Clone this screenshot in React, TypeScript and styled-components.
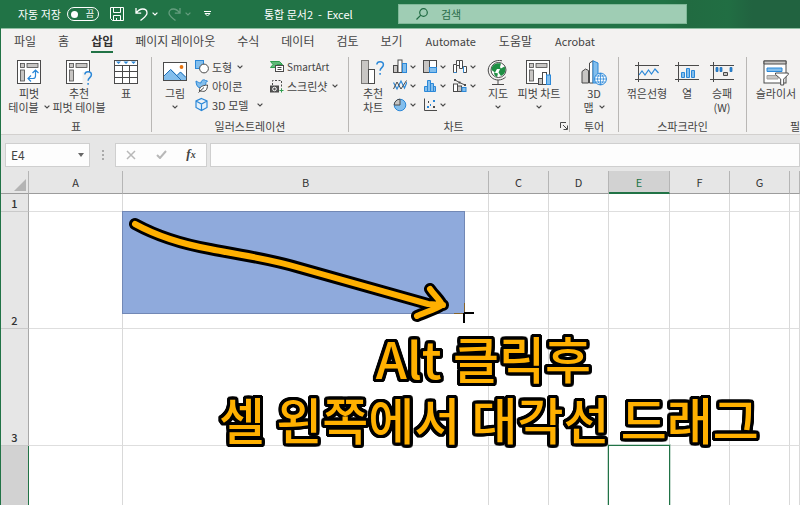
import React from 'react';
import styled, { createGlobalStyle, css } from 'styled-components';

const GREEN = '#217346';
const INK = '#4a4a4a';
const BLUE = '#2b88d8';
const SKY = '#83beec';

const GlobalStyle = createGlobalStyle`
  * { box-sizing: border-box; }
  body {
    margin: 0;
    overflow: hidden;
    background: #fff;
    color: #444;
    font-family: "Noto Sans CJK KR", "Noto Sans", sans-serif;
    font-size: 11px;
  }
  button, input { font: inherit; color: inherit; }
  button { margin: 0; padding: 0; border: 0; background: none; }
  svg { display: block; flex: none; }
`;

const Window = styled.div`
  display: flex;
  flex-direction: column;
  height: 100vh;
  border-left: 1px solid ${GREEN};
`;

/* ---------- Title bar ---------- */

const TitleBar = styled.header`
  display: flex;
  align-items: center;
  height: 29px;
  padding-left: 17px;
  flex: none;
  color: #fff;
  background: linear-gradient(90deg, ${GREEN} 83%, #216b41 86%, #216e43 91%, #216340 94%);
  border-bottom: 1px solid #8fbfa3;
`;

const AutoSave = styled.label`
  display: flex;
  align-items: center;
  gap: 6px;
  white-space: nowrap;
`;

const SwitchTrack = styled.span`
  display: flex;
  align-items: center;
  justify-content: space-between;
  width: 32px;
  height: 14px;
  padding: 0 4px 0 3px;
  border: 1px solid #fff;
  border-radius: 7px;
  font-size: 9px;
  line-height: 12px;
  &::before {
    content: "";
    width: 7px;
    height: 7px;
    border-radius: 50%;
    background: #fff;
  }
`;

const HiddenCheck = styled.input`
  position: absolute;
  opacity: 0;
  width: 1px;
  height: 1px;
  margin: 0;
`;

const QuickTools = styled.div`
  display: flex;
  align-items: center;
  gap: 4px;
  width: 165px;
  padding-left: 11px;
`;

const QuickButton = styled.button<{ $faded?: boolean; $gap?: number }>`
  display: flex;
  align-items: center;
  margin-right: ${(p) => p.$gap ?? 0}px;
  opacity: ${(p) => (p.$faded ? 0.3 : 1)};
`;

const DocTitle = styled.h1`
  margin: 0;
  width: 134px;
  font-size: 11px;
  font-weight: 400;
  white-space: pre;
`;

const SearchBox = styled.label`
  display: flex;
  align-items: center;
  gap: 13px;
  flex: 0 1 289px;
  height: 20px;
  padding-left: 17px;
  color: #1f6a42;
  background: #9fcdb4;
  border: 1px solid #7fb898;
`;

const SearchInput = styled.input`
  flex: 1;
  min-width: 0;
  padding: 0;
  border: 0;
  outline: 0;
  background: none;
  &::placeholder { color: #2a6b48; opacity: 1; }
`;

/* ---------- Tabs ---------- */

const Tabs = styled.nav`
  display: flex;
  flex: none;
  height: 24px;
  padding-left: 2px;
  background: #f3f2f1;
`;

const Tab = styled.button<{ $active?: boolean; $latin?: boolean }>`
  position: relative;
  padding: 0 ${(p) => (p.$latin ? 12 : 11)}px;
  font-size: ${(p) => (p.$latin ? 11 : 12)}px;
  line-height: 24px;
  white-space: nowrap;
  ${(p) =>
    p.$active &&
    css`
      font-weight: 700;
      color: #333;
      &::after {
        content: "";
        position: absolute;
        left: 11px;
        right: 11px;
        bottom: 0;
        height: 2px;
        background: ${GREEN};
      }
    `}
`;

/* ---------- Ribbon ---------- */

const Ribbon = styled.section`
  display: flex;
  flex: none;
  height: 82px;
  overflow: hidden;
  background: #f3f2f1;
  border-bottom: 1px solid #d2d0ce;
`;

const Group = styled.div<{ $width: number }>`
  display: flex;
  flex-direction: column;
  flex: none;
  width: ${(p) => p.$width}px;
  height: 75px;
  margin-top: 4px;
  border-right: 1px solid #b9b7b5;
`;

const GroupBody = styled.div<{ $pad: number }>`
  display: flex;
  flex: 1;
  padding-left: ${(p) => p.$pad}px;
`;

const GroupFoot = styled.div`
  display: flex;
  align-items: center;
  height: 12px;
  line-height: 12px;
`;

const GroupName = styled.span`
  flex: 1;
  text-align: center;
`;

const BigButton = styled.button<{ $width: number }>`
  display: flex;
  flex-direction: column;
  align-items: center;
  width: ${(p) => p.$width}px;
  flex: none;
  padding-top: 3px;
  line-height: 14px;
  white-space: nowrap;
`;

const IconSlot = styled.span`
  height: 26px;
`;

const LabelLine = styled.span`
  display: flex;
  align-items: center;
  justify-content: center;
  gap: 5px;
  height: 14px;
`;

const SmallStack = styled.div<{ $width: number }>`
  display: flex;
  flex-direction: column;
  flex: none;
  width: ${(p) => p.$width}px;
`;

const SmallButton = styled.button<{ $gap?: number; $latin?: boolean }>`
  display: flex;
  align-items: center;
  gap: 3px;
  height: 19px;
  font-size: ${(p) => (p.$latin ? 10 : 11)}px;
  white-space: nowrap;
  > svg + svg { margin-left: ${(p) => p.$gap ?? 2}px; }
`;

const ChartGrid = styled.div`
  display: grid;
  grid-template-columns: repeat(3, 30px);
  grid-auto-rows: 19px;
  margin-left: 4px;
`;

/* ---------- Formula bar ---------- */

const FormulaBar = styled.div`
  display: flex;
  flex: none;
  align-items: center;
  height: 36px;
  padding: 3px 0 0 4px;
  background: #e6e6e6;
`;

const Field = styled.div<{ $width?: number }>`
  display: flex;
  align-items: center;
  height: 24px;
  min-width: 0;
  ${(p) => (p.$width ? `flex: none; width: ${p.$width}px;` : 'flex: 1;')}
  background: #fdfdfd;
  border: 1px solid #cfcfcf;
`;

const NameInput = styled.input`
  flex: 1;
  width: 0;
  min-width: 0;
  padding: 0 0 0 5px;
  border: 0;
  outline: 0;
  background: none;
  font-size: 12px;
`;

const FieldButton = styled.button<{ $width: number }>`
  display: flex;
  align-items: center;
  justify-content: center;
  flex: none;
  width: ${(p) => p.$width}px;
  height: 100%;
`;

const Dots = styled.span`
  display: flex;
  flex-direction: column;
  align-items: center;
  gap: 2px;
  width: 25px;
  i { width: 2px; height: 2px; background: #aaa; }
`;

const Spacer = styled.span`
  width: 3px;
`;

const FxMark = styled.em`
  font-family: "Liberation Serif", serif;
  font-size: 13px;
  font-weight: 700;
  line-height: 14px;
  small { font-size: 10px; }
`;

/* ---------- Sheet ---------- */

const Sheet = styled.main`
  position: relative;
  flex: 1;
  min-height: 0;
  overflow: hidden;
`;

const Grid = styled.table`
  width: 100%;
  table-layout: fixed;
  border-collapse: separate;
  border-spacing: 0;
`;

const Corner = styled.td`
  height: 23px;
  padding: 0 2px 2px 0;
  vertical-align: bottom;
  background: #e6e6e6;
  border-right: 1px solid #b5b5b5;
  border-bottom: 1px solid #9c9c9c;
  svg { margin-left: auto; }
`;

const ColHead = styled.th<{ $selected?: boolean }>`
  height: 23px;
  padding: 0;
  font-weight: 400;
  line-height: 16px;
  color: ${(p) => (p.$selected ? GREEN : '#333')};
  background: ${(p) => (p.$selected ? '#d2d2d2' : '#e6e6e6')};
  border-right: 1px solid #b5b5b5;
  border-bottom: ${(p) => (p.$selected ? `2px solid ${GREEN}` : '1px solid #9c9c9c')};
`;

const RowHead = styled.th<{ $selected?: boolean }>`
  padding: 0;
  font-weight: 500;
  line-height: 15px;
  vertical-align: bottom;
  color: #333;
  background: ${(p) => (p.$selected ? '#d2d2d2' : '#e6e6e6')};
  border-right: 1px solid ${(p) => (p.$selected ? GREEN : '#a8a8a8')};
  border-bottom: 1px solid #c9c9c9;
`;

const Cell = styled.td<{ $selected?: boolean }>`
  padding: 0;
  border-right: 1px solid #d9d9d9;
  border-bottom: 1px solid #dedede;
  ${(p) =>
    p.$selected &&
    css`
      position: relative;
      &::after {
        content: "";
        position: absolute;
        inset: -1px -1px -3px;
        border: 1px solid ${GREEN};
        box-shadow: 0 0 0 1px #21734640;
      }
    `}
`;

const GridRow = styled.tr<{ $height: number }>`
  height: ${(p) => p.$height}px;
`;

const DrawnShape = styled.div`
  position: absolute;
  left: 121px;
  top: 40px;
  width: 343px;
  height: 103px;
  background: #8faadc;
  border: 1px solid #7288b5;
`;

const Ink = styled.svg`
  position: absolute;
  left: 121px;
  top: 40px;
`;

const Caption = styled.p`
  position: absolute;
  left: 218px;
  top: 156px;
  margin: 0;
  color: #ffb000;
  font-size: 50px;
  font-weight: 500;
  line-height: 61px;
  text-align: center;
  white-space: nowrap;
  text-shadow:
    3px 0 #000, -3px 0 #000, 0 3px #000, 0 -3px #000,
    3px 1px #000, 3px -1px #000, -3px 1px #000, -3px -1px #000,
    1px 3px #000, 1px -3px #000, -1px 3px #000, -1px -3px #000,
    2px 2px #000, 2px -2px #000, -2px 2px #000, -2px -2px #000,
    3px 2px #000, 3px -2px #000, -3px 2px #000, -3px -2px #000,
    2px 3px #000, 2px -3px #000, -2px 3px #000, -2px -3px #000;
`;

const CaptionLead = styled.span`
  margin-right: 11px;
`;

/* ---------- Icons ---------- */

const Chevron = ({ color = INK }: { color?: string }) => (
  <svg width="6" height="4" viewBox="0 0 6 4" fill="none" stroke={color} strokeWidth="1.2">
    <path d="M.6.6 3 3 5.4.6" />
  </svg>
);

const svg = (w: number, h: number, children: React.ReactNode) => (
  <svg width={w} height={h} viewBox={`0 0 ${w} ${h}`} fill="none" stroke={INK}>
    {children}
  </svg>
);

const SaveIcon = () => (
  <svg width="14" height="14" viewBox="0 0 14 14" fill="none" stroke="#fff">
    <path d="M.5.5h13v13h-11l-2-2zM3.5.5v5h7v-5M3.5 13.5v-5h7v5M6.5 11v2.5" />
  </svg>
);

const UndoIcon = () => (
  <svg width="13" height="14" viewBox="0 0 13 14" fill="none" stroke="#fff" strokeWidth="1.3">
    <path d="M1 1v5.2h5.2M1.2 6C3 3.5 5 2 7.7 2c2.6 0 4.3 1.700 4.300 4 0 3-3 4.500-6.500 7.500" />
  </svg>
);

const RedoIcon = () => (
  <svg width="13" height="14" viewBox="0 0 13 14" fill="none" stroke="#fff" strokeWidth="1.3">
    <path d="M12 1v5.200H6.800M11.800 6C10 3.500 8 2 5.300 2 2.700 2 1 3.700 1 6c0 3 3 4.500 6.500 7.500" />
  </svg>
);

const PivotFrame = () => (
  <>
    <rect x=".5" y=".5" width="23" height="23" fill="#fff" />
    <g fill="#c8c6c4" strokeWidth=".8">
      <rect x="3.500" y="3.500" width="4" height="4" />
      <rect x="10" y="3.500" width="11" height="4" />
      <rect x="3.500" y="10" width="4" height="11" />
    </g>
  </>
);

const PivotTableIcon = () =>
  svg(24, 24, (
    <>
      <PivotFrame />
      <path d="M18.500 10.500v5.500q0 2.500-2.500 2.500h-4.500M15.500 13l3-3 3 3M14 15.500l-3 3 3 3" stroke={BLUE} strokeWidth="1.200" />
    </>
  ));

const Question = ({ x = 0, y = 0 }) => (
  <g transform={`translate(${x} ${y})`} stroke={BLUE} strokeWidth="1.500">
    <path d="M.8 3.500C1 1.800 2.200.8 4 .8c2 0 3.400 1.200 3.400 3 0 2.700-3.300 3-3.300 6" />
    <path d="M4.100 12v1.800" />
  </g>
);

const SuggestPivotIcon = () =>
  svg(27, 26, (
    <>
      <PivotFrame />
      <path d="M16.500 24V12H24v12" stroke="none" fill="#f3f2f1" />
      <Question x={18} y={11} />
    </>
  ));

const TableIcon = () =>
  svg(24, 24, (
    <>
      <rect x=".5" y=".5" width="23" height="23" fill="#fff" />
      <path d="M.5 5.500h23M.5 11.500h23M.5 17.500h23M8.500 5v18.500M15.500 5v18.500" />
      <path d="M2 1.500h5L4.500 4zM9.500 1.500h5L12 4zM17 1.500h5L19.500 4z" fill={BLUE} stroke="none" />
    </>
  ));

const PictureIcon = () =>
  svg(24, 24, (
    <>
      <rect x=".5" y="2.500" width="23" height="18" fill="#fff" />
      <path d="M1 16.500 8 9l6 6 3.500-3.500L23 17v3H1z" fill={SKY} stroke="none" />
      <path d="M1 16 7.500 9.500 18 20M14 15.500l3.500-3.500 5.500 5.500" stroke="#1e6fb8" />
      <circle cx="18.500" cy="7" r="1.900" fill="#e8720c" stroke="none" />
    </>
  ));

const ShapesIcon = () =>
  svg(14, 15, (
    <>
      <rect x=".5" y="1.500" width="8" height="8" fill={SKY} stroke={BLUE} />
      <circle cx="9" cy="9.500" r="4.400" fill="#fff" />
    </>
  ));

const IconsIcon = () =>
  svg(14, 15, (
    <>
      <path d="M1 3c2 1 3 2 5 2 0-3 3-4 4.500-2.500L12.500 3 11 4.500C11 8 7 10 4 9.500c-2-.5-3-4-3-6.500z" fill={SKY} stroke={BLUE} />
      <path d="M4.500 13C4 9 7 7.500 12.500 7c0 4.500-2 7.500-6.500 6zM3.500 14.500 9 9.500" fill="#fff" />
    </>
  ));

const CubeIcon = () =>
  svg(14, 15, (
    <path d="M6.500 1.500 12 4v6.500L6.500 13.500 1 10.500V4zM1 4l5.500 3L12 4M6.500 7v6.500" fill="#e5f1fb" stroke={BLUE} strokeWidth="1.200" />
  ));

const SmartArtIcon = () =>
  svg(14, 14, (
    <>
      <path d="M.5 1.500h9l3 3H7l-1 3H.5L3 4.500z" fill="#5fb878" stroke="#2f9e4f" />
      <rect x="5.500" y="5.500" width="8" height="6" fill="#fff" />
      <path d="M7.500 7.500h4M7.500 9.500h4" />
    </>
  ));

const ScreenshotIcon = () =>
  svg(14, 14, (
    <>
      <path d="M2.500 6V1.500h9v8" strokeDasharray="2 1.500" />
      <rect x=".5" y="7" width="8" height="6" fill="#555" />
      <circle cx="4.500" cy="10" r="1.800" fill="#555" stroke="#fff" />
      <path d="M11.500 9.500v4M9.500 11.500h4" stroke="#2f9e4f" />
    </>
  ));

const SuggestChartIcon = () =>
  svg(26, 26, (
    <>
      <rect x="1.500" y=".5" width="7" height="23" fill="#c8c6c4" stroke="#797775" />
      <rect x="8.500" y="9.500" width="6" height="14" fill="#fff" />
      <Question x={16} y={1} />
    </>
  ));

const BarIcon = () =>
  svg(14, 15, (
    <>
      <rect x=".5" y="6.500" width="4" height="7" fill="#c8c6c4" />
      <rect x="5" y="1" width="4" height="12.500" fill="#fff" />
      <rect x="9.500" y="4.500" width="4" height="9" fill={SKY} stroke={BLUE} />
    </>
  ));

const TreemapIcon = () =>
  svg(14, 15, (
    <>
      <rect x=".5" y="1.500" width="13" height="12" fill="#fff" />
      <rect x=".5" y="1.500" width="6" height="12" fill="#c8c6c4" />
      <rect x="6.500" y="8.500" width="7" height="5" fill={SKY} stroke={BLUE} />
    </>
  ));

const WaterfallIcon = () =>
  svg(14, 15, (
    <>
      <path d="M.5 13.500V5.500h3v8zM3.500 5.500v-4h3v5h-3M6.500 1.500h3v8h-3zM10.500 13.500v-6h3v6z" fill="#fff" />
      <path d="M10.500 13.500v-6M1 13.500h2.500" stroke={BLUE} />
    </>
  ));

const LineIcon = () =>
  svg(14, 15, (
    <>
      <path d="M.5 4.500 4 11l4-8 3.500 7L14 4" stroke={BLUE} strokeWidth="1.200" />
      <path d="M.5 11 4 4l4 7 5.500-8.500" />
    </>
  ));

const HistogramIcon = () =>
  svg(14, 15, <path d="M1.500 13.500v-5h3v-6h3v3h3v3h2v5zM4.500 8v5.500M7.500 5v8.500M10.500 8v5.500" fill={SKY} stroke={BLUE} />);

const ComboIcon = () =>
  svg(14, 15, (
    <>
      <rect x=".5" y="6" width="4" height="7.500" fill="#fff" />
      <rect x="4.500" y="8" width="4" height="5.500" fill="#c8c6c4" />
      <rect x="9" y="9.500" width="4" height="4" fill={SKY} stroke={BLUE} />
      <path d="m2 2 4.500 2.500L12 7" />
      <path d="M1 1h2v2H1zM5.500 3.500h2v2h-2zM11 6h2v2h-2z" fill={INK} stroke="none" />
    </>
  ));

const PieIcon = () =>
  svg(14, 15, (
    <>
      <circle cx="7" cy="8" r="5.800" fill={SKY} stroke={BLUE} />
      <path d="M7 8H1.200A5.800 5.800 0 0 1 7 2.200z" fill="#c8c6c4" />
    </>
  ));

const ScatterIcon = () =>
  svg(14, 15, (
    <>
      <path d="M1.500 1.500v12H14" />
      <path d="M4 9h2v2H4zM7 7h1v2H7zM10 3h2v2h-2z" fill={BLUE} stroke="none" />
      <path d="M5 4h1v2H5zM10 9h2v2h-2z" fill={INK} stroke="none" />
    </>
  ));

const GlobeIcon = () =>
  svg(24, 26, (
    <>
      <circle cx="12.500" cy="10" r="7.500" fill="#fff" />
      <path d="M7.500 5c2-2 6-2 7.500-1.500l-1 3.500 1 2-4 0-2 3.500L5.500 10c0-2 .8-4 2-5zM14 9l4.500-2.500c1.500 2 1 5.500-.5 7.500l-3 2-2.500-3.500zM8 12.500l4 1-1 3.500c-1.500-.3-3-2-3-4.500z" fill="#1f9044" stroke="none" />
      <path d="M16 .8C10-.8 2.500 3 2.200 10c.2 6 4.600 10 10 10 3.300 0 5.800-1.300 7.500-3M12 20v4M6 24.500h12" />
    </>
  ));

const PivotChartIcon = () =>
  svg(26, 26, (
    <>
      <PivotFrame />
      <rect x="12.500" y="18.500" width="4" height="6" fill="#c8c6c4" />
      <rect x="16.500" y="12.500" width="4" height="12" fill="#fff" />
      <rect x="20.500" y="15" width="4" height="9.500" fill={SKY} stroke={BLUE} />
    </>
  ));

const Map3DIcon = () =>
  svg(26, 26, (
    <>
      <path d="M1 11.500 4.500 9l3 1.500V23H1z" fill="#c8c6c4" />
      <path d="M8.500 3 12 .8V23H8.500z" fill="#fff" />
      <path d="M12 .8 17 3v20h-5z" fill={SKY} stroke={BLUE} />
      <circle cx="19.500" cy="19" r="5.900" fill="#fff" stroke={BLUE} />
      <path d="M13.600 19h12M14.500 16h10M14.500 22h10M19.500 13v12M19.500 13c-4 4-4 8 0 12M19.500 13c4 4 4 8 0 12" stroke={BLUE} strokeWidth=".8" />
    </>
  ));

const SparkAxes = () => <path d="M0 5.500h24M0 19.500h24M3.500 2v20" />;

const SparkLineIcon = () =>
  svg(24, 24, (
    <>
      <path d="m4 15 3-4 3 4 3.500-5 3 4L20 9l3.500 4" stroke={BLUE} strokeWidth="1.200" />
      <SparkAxes />
    </>
  ));

const SparkColumnIcon = () =>
  svg(24, 24, (
    <>
      <path d="M6.500 12.500h3v5h-3zM11.500 8.500h3v9h-3zM16.500 10.500h3v7h-3z" fill={SKY} stroke={BLUE} />
      <SparkAxes />
    </>
  ));

const SparkWinIcon = () =>
  svg(24, 24, (
    <>
      <path d="M6 7.500h2v4H6zM10 7.500h2v4h-2zM20 7.500h2v4h-2z" fill={BLUE} stroke="#1e6fb8" strokeWidth=".8" />
      <path d="M13.500 12.500h4v3h-4z" fill="#c8c6c4" />
      <SparkAxes />
    </>
  ));

const SlicerIcon = () =>
  svg(26, 26, (
    <>
      <rect x="1" y="1" width="22" height="22" fill="#fff" />
      <path d="M1 1h22v3H1z" fill="#c8c6c4" />
      <path d="M4 8h15v3.500H4z" fill={SKY} stroke={BLUE} />
      <path d="M4 15.500h11V19H4z" fill="#c8c6c4" stroke="#a19f9d" />
      <path d="M12.500 13h12.700v1.500l-4.500 4.500v6h-3v-6l-5.200-4.500z" fill="#fff" />
    </>
  ));

const LauncherIcon = () =>
  svg(8, 8, <path d="M.5 6V.5H6M3 3l4 4M7.500 3.500v4h-4" />);

/* ---------- Data ---------- */

const tabNames = ['파일', '홈', '삽입', '페이지 레이아웃', '수식', '데이터', '검토', '보기', 'Automate', '도움말', 'Acrobat'];

const chartButtons = [
  { name: '세로 막대형', Icon: BarIcon },
  { name: '계층 구조', Icon: TreemapIcon },
  { name: '폭포', Icon: WaterfallIcon },
  { name: '꺾은선형', Icon: LineIcon },
  { name: '통계', Icon: HistogramIcon },
  { name: '콤보', Icon: ComboIcon },
  { name: '원형', Icon: PieIcon },
  { name: '분산형', Icon: ScatterIcon },
];

const columns = [
  { name: 'A', width: 94 },
  { name: 'B', width: 366 },
  { name: 'C', width: 60 },
  { name: 'D', width: 60 },
  { name: 'E', width: 61 },
  { name: 'F', width: 60 },
  { name: 'G', width: 60 },
  { name: '', width: undefined },
];

const rows = [
  { label: '1', height: 18 },
  { label: '2', height: 117 },
  { label: '3', height: 117 },
  { label: '', height: 60, selected: true },
];

/* ---------- Composition ---------- */

type CommandProps = { Icon: () => React.JSX.Element; lines: string[]; width: number; menu?: 'inline' | 'below' };

const Command = ({ Icon, lines, width, menu }: CommandProps) => (
  <BigButton $width={width}>
    <IconSlot><Icon /></IconSlot>
    {lines.map((line, i) => (
      <LabelLine key={line}>
        {line}
        {menu === 'inline' && i === lines.length - 1 && <Chevron />}
      </LabelLine>
    ))}
    {menu === 'below' && (
      <LabelLine>
        <Chevron />
      </LabelLine>
    )}
  </BigButton>
);

export default function App() {
  return (
    <Window>
      <GlobalStyle />
      <TitleBar>
        <AutoSave>
          자동 저장
          <HiddenCheck type="checkbox" />
          <SwitchTrack>끔</SwitchTrack>
        </AutoSave>
        <QuickTools>
          <QuickButton aria-label="저장" $gap={7}><SaveIcon /></QuickButton>
          <QuickButton aria-label="실행 취소"><UndoIcon /></QuickButton>
          <QuickButton aria-label="실행 취소 목록" $gap={6}><Chevron color="#fff" /></QuickButton>
          <QuickButton aria-label="다시 실행" $faded><RedoIcon /></QuickButton>
          <QuickButton aria-label="다시 실행 목록" $faded $gap={9}><Chevron color="#fff" /></QuickButton>
          <QuickButton aria-label="빠른 실행 도구 모음 사용자 지정">
            <svg width="7" height="6" viewBox="0 0 7 6" fill="none" stroke="#fff">
              <path d="M0 .5h7M1 2.500 3.500 5 6 2.500z" />
            </svg>
          </QuickButton>
        </QuickTools>
        <DocTitle>{'통합 문서2  -  Excel'}</DocTitle>
        <SearchBox>
          <svg width="12" height="12" viewBox="0 0 12 12" fill="none" stroke="currentColor" strokeWidth="1.200">
            <circle cx="7.500" cy="4.500" r="3.800" />
            <path d="M4.800 7.200.5 11.500" />
          </svg>
          <SearchInput type="search" placeholder="검색" aria-label="검색" />
        </SearchBox>
      </TitleBar>

      <Tabs>
        {tabNames.map((name) => (
          <Tab key={name} $active={name === '삽입'} $latin={/^[A-Z]/.test(name)}>{name}</Tab>
        ))}
      </Tabs>

      <Ribbon>
        <Group $width={151}>
          <GroupBody $pad={7}>
            <Command Icon={PivotTableIcon} lines={['피벗', '테이블']} width={42} menu="inline" />
            <Command Icon={SuggestPivotIcon} lines={['추천', '피벗 테이블']} width={58} />
            <Command Icon={TableIcon} lines={['표']} width={36} />
          </GroupBody>
          <GroupFoot><GroupName>표</GroupName></GroupFoot>
        </Group>

        <Group $width={197}>
          <GroupBody $pad={3}>
            <Command Icon={PictureIcon} lines={['그림']} width={40} menu="below" />
            <SmallStack $width={75}>
              <SmallButton><ShapesIcon />도형<Chevron /></SmallButton>
              <SmallButton><IconsIcon />아이콘</SmallButton>
              <SmallButton $gap={6}><CubeIcon />3D 모델<Chevron /></SmallButton>
            </SmallStack>
            <SmallStack $width={74}>
              <SmallButton $latin><SmartArtIcon />SmartArt</SmallButton>
              <SmallButton><ScreenshotIcon />스크린샷<Chevron /></SmallButton>
            </SmallStack>
          </GroupBody>
          <GroupFoot><GroupName>일러스트레이션</GroupName></GroupFoot>
        </Group>

        <Group $width={221}>
          <GroupBody $pad={8}>
            <Command Icon={SuggestChartIcon} lines={['추천', '차트']} width={32} />
            <ChartGrid>
              {chartButtons.map(({ name, Icon }) => (
                <SmallButton key={name} aria-label={name} $gap={0}><Icon /><Chevron /></SmallButton>
              ))}
            </ChartGrid>
            <Command Icon={GlobeIcon} lines={['지도']} width={30} menu="below" />
            <Command Icon={PivotChartIcon} lines={['피벗 차트']} width={52} menu="below" />
          </GroupBody>
          <GroupFoot>
            <GroupName>차트</GroupName>
            <FieldButton $width={11} aria-label="차트 옵션"><LauncherIcon /></FieldButton>
          </GroupFoot>
        </Group>

        <Group $width={49}>
          <GroupBody $pad={2}>
            <Command Icon={Map3DIcon} lines={['3D', '맵']} width={44} menu="inline" />
          </GroupBody>
          <GroupFoot><GroupName>투어</GroupName></GroupFoot>
        </Group>

        <Group $width={128}>
          <GroupBody $pad={6}>
            <Command Icon={SparkLineIcon} lines={['꺾은선형']} width={44} />
            <Command Icon={SparkColumnIcon} lines={['열']} width={36} />
            <Command Icon={SparkWinIcon} lines={['승패', '(W)']} width={34} />
          </GroupBody>
          <GroupFoot><GroupName>스파크라인</GroupName></GroupFoot>
        </Group>

        <Group $width={107}>
          <GroupBody $pad={5}>
            <Command Icon={SlicerIcon} lines={['슬라이서']} width={48} />
          </GroupBody>
          <GroupFoot><GroupName>필터</GroupName></GroupFoot>
        </Group>
      </Ribbon>

      <FormulaBar>
        <Field $width={85}>
          <NameInput defaultValue="E4" aria-label="이름 상자" />
          <FieldButton $width={16} aria-label="이름 목록">
            <svg width="6" height="4" viewBox="0 0 6 4"><path d="M0 0h6L3 4z" fill="#666" /></svg>
          </FieldButton>
        </Field>
        <Dots><i /><i /><i /></Dots>
        <Field $width={92}>
          <FieldButton $width={30} aria-label="취소">
            <svg width="10" height="10" viewBox="0 0 10 10" stroke="#b8b8b8" strokeWidth="1.500"><path d="m1 1 8 8M9 1 1 9" /></svg>
          </FieldButton>
          <FieldButton $width={30} aria-label="입력">
            <svg width="11" height="9" viewBox="0 0 11 9" fill="none" stroke="#b8b8b8" strokeWidth="2"><path d="m1 5 3 3 6-7" /></svg>
          </FieldButton>
          <FieldButton $width={30} aria-label="함수 삽입">
            <FxMark>f<small>x</small></FxMark>
          </FieldButton>
        </Field>
        <Spacer />
        <Field>
          <NameInput aria-label="수식 입력줄" />
        </Field>
      </FormulaBar>

      <Sheet>
        <Grid>
          <colgroup>
            <col width={28} />
            {columns.map((c) => <col key={c.name} width={c.width} />)}
          </colgroup>
          <thead>
            <tr>
              <Corner>
                <svg width="12" height="12" viewBox="0 0 12 12"><path d="M12 0v12H0z" fill="#b4b4b4" /></svg>
              </Corner>
              {columns.map((c) => (
                <ColHead key={c.name} scope="col" $selected={c.name === 'E'}>{c.name}</ColHead>
              ))}
            </tr>
          </thead>
          <tbody>
            {rows.map((row, i) => (
              <GridRow key={i} $height={row.height}>
                <RowHead scope="row" $selected={row.selected}>{row.label}</RowHead>
                {columns.map((c) => (
                  <Cell key={c.name} $selected={row.selected && c.name === 'E'} />
                ))}
              </GridRow>
            ))}
          </tbody>
        </Grid>
        <DrawnShape />
        <Ink width="356" height="116" viewBox="0 0 356 116" fill="none" strokeLinecap="round" strokeLinejoin="round">
          {[{ c: '#000', w: 12 }, { c: '#ffb000', w: 6 }].map(({ c, w }) => (
            <path
              key={c}
              stroke={c}
              strokeWidth={w}
              d="M13 13C33 24 60 33 88 38C122 45 145 47 178 57C230 72 270 83 306 93L321 94M308 78C312 84 319 90 320 94C314 98 304 101 295 105"
            />
          ))}
          <g strokeLinecap="butt" strokeWidth="2">
            <path d="M332 102.500h10M342.500 92v10" stroke="#86642c" strokeWidth="1" />
            <path d="M342 102h10M342 102v10" stroke="#000" />
          </g>
        </Ink>
        <Caption>
          <CaptionLead>Alt 클릭후</CaptionLead>
          <br />
          셀 왼쪽에서 대각선 드래그
        </Caption>
      </Sheet>
    </Window>
  );
}
